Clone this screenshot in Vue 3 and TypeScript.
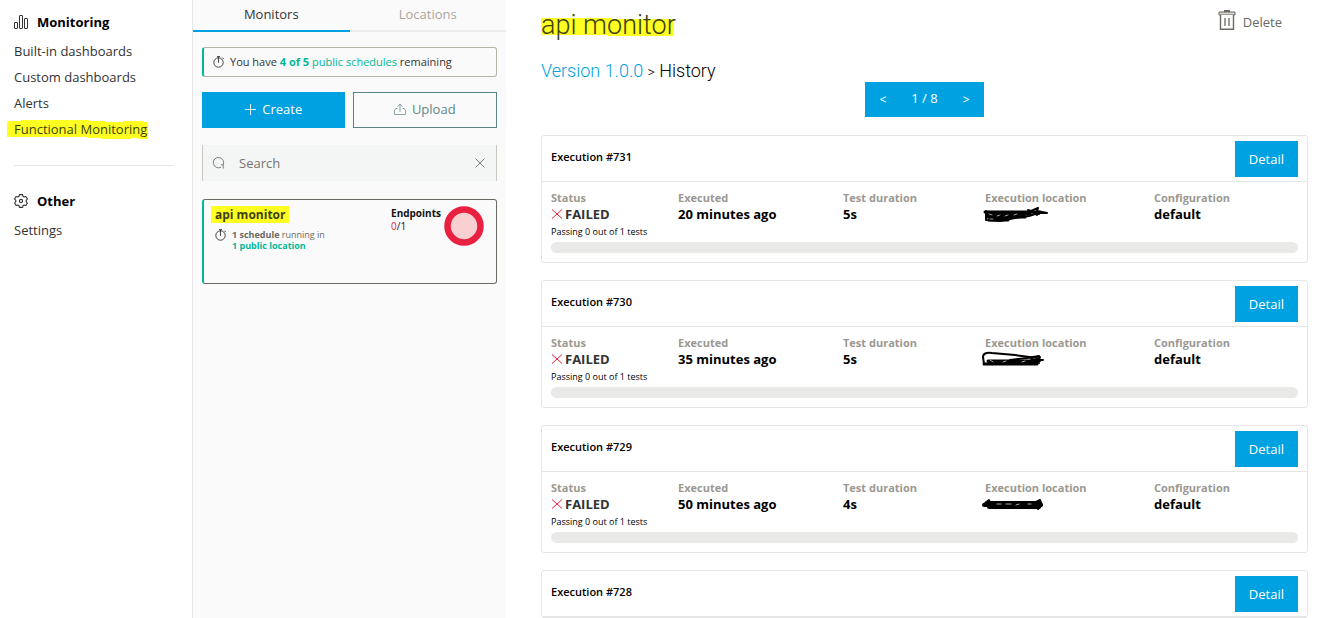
<script setup lang="ts">
import { ref } from 'vue'

interface Details {
  executed: string
  duration: string
  configuration: string
}
interface Execution {
  id: number
  details?: Details
}

const search = ref('')
const executions: Execution[] = [
  { id: 731, details: { executed: '20 minutes ago', duration: '5s', configuration: 'default' } },
  { id: 730, details: { executed: '35 minutes ago', duration: '5s', configuration: 'default' } },
  { id: 729, details: { executed: '50 minutes ago', duration: '4s', configuration: 'default' } },
  { id: 728 },
]
</script>

<template>
  <div class="app">
    <nav class="sidebar">
      <h2 class="group">
        <svg class="group-icon" viewBox="0 0 14 14" aria-hidden="true">
          <g fill="none" stroke="#333" stroke-width="1">
            <rect x="0.5" y="7.5" width="3" height="6" rx="0.5" />
            <rect x="5.5" y="0.5" width="3" height="13" rx="0.5" />
            <rect x="10.5" y="3.5" width="3" height="10" rx="0.5" />
          </g>
        </svg>
        Monitoring
      </h2>
      <ul class="links">
        <li><a href="#">Built-in dashboards</a></li>
        <li><a href="#">Custom dashboards</a></li>
        <li><a href="#">Alerts</a></li>
        <li>
          <a href="#" class="marked">
            <svg class="marker nav-marker" viewBox="0 0 141 19" aria-hidden="true">
              <path d="M0 1H14V0H82V1H98V2H116V1H136V2H141V19H131V18H124V19H94V18H80V17H0Z" fill="#ffff21" />
            </svg>
            <span>Functional Monitoring</span>
          </a>
        </li>
      </ul>
      <hr class="rule" />
      <h2 class="group">
        <svg class="group-icon" viewBox="0 0 14 14" aria-hidden="true">
          <g fill="none" stroke="#333" stroke-width="1.1" stroke-linejoin="round">
            <path d="M5 2.3 5.4.6H8.6L9 2.3 10.2 3 11.9 2.5 13.4 5 12.2 6.3V7.7L13.4 9 11.9 11.5 10.2 11 9 11.7 8.6 13.4H5.4L5 11.7 3.8 11 2.1 11.5.6 9 1.8 7.7V6.3L.6 5 2.1 2.5 3.8 3Z" />
            <circle cx="7" cy="7" r="1.6" />
          </g>
        </svg>
        Other
      </h2>
      <ul class="links">
        <li><a href="#">Settings</a></li>
      </ul>
    </nav>

    <section class="panel">
      <div class="tabs" role="tablist">
        <button class="tab active" role="tab" aria-selected="true">Monitors</button>
        <button class="tab" role="tab" aria-selected="false">Locations</button>
      </div>
      <div class="panel-body">
        <p class="notice">
          <svg class="watch" viewBox="0 0 12 12" aria-hidden="true">
            <g fill="none" stroke="#444" stroke-width="1">
              <circle cx="5.5" cy="6.5" r="4.7" />
              <path d="M5.5 6.8V.5M4 .6H7M9.3 1.6 10.8 3.1" />
            </g>
          </svg>
          <span>You have <span class="green"><b>4 of 5</b> public schedules</span> remaining</span>
        </p>
        <div class="actions">
          <button class="btn primary">
            <svg class="btn-icon" viewBox="0 0 12 12" aria-hidden="true">
              <path d="M6.5 1V12M1 6.5H12" fill="none" stroke="#fff" stroke-width="0.9" />
            </svg>
            Create
          </button>
          <button class="btn outline">
            <svg class="btn-icon" viewBox="0 0 12 12" aria-hidden="true">
              <path d="M3.5 5.5H1.8L.5 7.5V11.5H11.5V7.5L10.2 5.5H8.5M6 9V1M3.5 3.5 6 1 8.5 3.5" fill="none" stroke="#7d9ca0" stroke-width="0.9" />
            </svg>
            Upload
          </button>
        </div>
        <div class="search">
          <svg class="search-icon" viewBox="0 0 13 14" aria-hidden="true">
            <path d="M9 11.2A5.2 5.2 0 1 1 11 9.2M8.8 8.8H11.2V12.6" fill="none" stroke="#77736d" stroke-width="0.9" />
          </svg>
          <input v-model="search" type="text" placeholder="Search" aria-label="Search" />
          <button class="clear" aria-label="Clear search" @click="search = ''">
            <svg viewBox="0 0 10 10" aria-hidden="true">
              <path d="M.5.5 9.5 9.5M9.5.5.5 9.5" fill="none" stroke="#77736d" stroke-width="0.9" />
            </svg>
          </button>
        </div>
        <article class="monitor">
          <div class="monitor-main">
            <h3 class="monitor-name">api monitor</h3>
            <div class="schedule">
              <svg class="watch" viewBox="0 0 12 12" aria-hidden="true">
                <g fill="none" stroke="#444" stroke-width="1">
                  <circle cx="5.5" cy="6.5" r="4.7" />
                  <path d="M5.5 6.8V.5M4 .6H7M9.3 1.6 10.8 3.1" />
                </g>
              </svg>
              <p><b>1 schedule</b> running in<br /><b class="green">1 public location</b></p>
            </div>
          </div>
          <div class="endpoints">
            <b>Endpoints</b>
            <span><span class="red">0</span>/1</span>
          </div>
          <svg class="ring" viewBox="0 0 40 40" aria-hidden="true">
            <circle cx="20" cy="20" r="16.5" fill="#facfd2" stroke="#e9203f" stroke-width="6.5" />
          </svg>
        </article>
      </div>
    </section>

    <main class="main">
      <header class="top">
        <h1 class="title">
          <svg class="marker title-marker" viewBox="0 0 133 18" aria-hidden="true">
            <path d="M0 0H70V1H133V18H66V17H0Z" fill="#ffff21" />
          </svg>
          <span>api monitor</span>
        </h1>
        <button class="delete">
          <svg class="bin" viewBox="0 0 18 20" aria-hidden="true">
            <path d="M1 2H17V5H1Z" fill="#d6d6d0" stroke="#6b6962" />
            <path d="M6 1H12" stroke="#6b6962" stroke-width="2" />
            <path d="M2.5 5V19.2H15.5V5" fill="#fff" stroke="#6b6962" stroke-width="1.4" />
            <path d="M7 8V16M11 8V16" stroke="#77756f" stroke-width="1.4" />
          </svg>
          <span>Delete</span>
        </button>
      </header>
      <p class="crumbs"><a href="#">Version 1.0.0</a> <span class="sep">&gt;</span> History</p>
      <div class="pager">
        <button aria-label="Previous page">&lt;</button>
        <span class="page">1 / 8</span>
        <button aria-label="Next page">&gt;</button>
      </div>

      <article v-for="run in executions" :key="run.id" class="card">
        <header class="card-head">
          <h3>Execution #{{ run.id }}</h3>
          <button class="detail">Detail</button>
        </header>
        <div v-if="run.details" class="card-body">
          <dl class="facts">
            <div class="status">
              <dt>Status</dt>
              <dd>
                <svg class="cross" viewBox="0 0 12 10" aria-hidden="true">
                  <path d="M1 .5 11 9.5M11 .5 1 9.5" fill="none" stroke="#e9203f" />
                </svg>FAILED
              </dd>
              <dd class="passing">Passing 0 out of 1 tests</dd>
            </div>
            <div><dt>Executed</dt><dd>{{ run.details.executed }}</dd></div>
            <div><dt>Test duration</dt><dd>{{ run.details.duration }}</dd></div>
            <div>
              <dt>Execution location</dt>
              <dd>
                <svg class="scribble" viewBox="0 0 68 18" aria-label="Hidden location" role="img">
                  <g fill="none" stroke="#000" stroke-linecap="round" stroke-linejoin="round">
                    <template v-if="run.id === 731">
                      <path d="M3 7H54M5 9H48M5 12H43M7 15H26" stroke-width="3" />
                      <path d="M4 6V15L18 16 33 13 47 11 56 8 65 8 55 6 56 3 49 6 55 10M46 5 57 9" stroke-width="2" />
                      <path d="M7 9 10 10M8 14H11M15 11 18 10M23 11 26 10M32 10 35 9" stroke="#999" stroke-width="1" />
                    </template>
                    <template v-else-if="run.id === 730">
                      <path d="M2 14 1 7Q1 2 10 3L33 5 55 8" stroke-width="2" />
                      <path d="M2 14H55M6 11H56" stroke-width="3" />
                      <path d="M28 10 45 8 57 6 58 11 49 10 61 10M49 8 57 13M52 13 58 7" stroke-width="2" />
                      <path d="M8 10 11 12M21 12 24 11M40 12 43 11" stroke="#aaa" stroke-width="1" />
                    </template>
                    <template v-else>
                      <path d="M2 10H59M5 8H57M7 12H57" stroke-width="4" />
                      <path d="M2 9 7 5 8 8M54 7 58 5 60 10 56 14" stroke-width="2" />
                      <path d="M15 9H19M24 9H29M34 10 37 9M46 9H49" stroke="#aaa" stroke-width="1" />
                    </template>
                  </g>
                </svg>
              </dd>
            </div>
            <div><dt>Configuration</dt><dd>{{ run.details.configuration }}</dd></div>
          </dl>
          <div class="bar"></div>
        </div>
      </article>
    </main>
  </div>
</template>

<style>
body {
  background: #fff;
  overflow: hidden;
}
</style>

<style scoped>
* {
  box-sizing: border-box;
}
.app {
  display: flex;
  height: 100vh;
  overflow: hidden;
  font-family: 'Open Sans', 'Noto Sans', sans-serif;
  font-size: 13px;
  line-height: 18px;
  color: #333;
}
h1, h2, h3, p, ul, dl, dd {
  margin: 0;
  padding: 0;
}
button {
  font: inherit;
  color: inherit;
  background: none;
  border: 0;
  padding: 0;
  cursor: pointer;
}
a {
  text-decoration: none;
  color: inherit;
}
svg {
  display: block;
  flex: none;
}
.green {
  color: #00b899;
}
.red {
  color: #e9203f;
}
.marker {
  position: absolute;
  z-index: -1;
}

.sidebar {
  flex: none;
  width: 193px;
  padding: 13px 18px 0 14px;
  border-right: 1px solid #e6e6e6;
}
.group {
  display: flex;
  align-items: center;
  gap: 9px;
  font-size: 13px;
  line-height: 18px;
  color: #000;
}
.group-icon {
  width: 14px;
  height: 14px;
}
.links {
  list-style: none;
  padding-top: 7px;
}
.links li {
  height: 26px;
  line-height: 26px;
}
.marked {
  position: relative;
  z-index: 0;
  display: inline-block;
  color: #403f10;
}
.nav-marker {
  left: -7px;
  top: 4px;
  width: 141px;
  height: 19px;
}
.rule {
  margin: 23px 0 26px;
  border: 0;
  border-top: 1px solid #e6e6e6;
}

.panel {
  flex: none;
  width: 313px;
  background: #fafafa;
}
.tabs {
  display: flex;
}
.tab {
  flex: 1;
  height: 32px;
  padding-bottom: 2px;
  border-bottom: 2px solid #ebebeb;
  color: #aaa6a0;
}
.tab.active {
  border-bottom-color: #00a1e0;
  color: #333;
}
.panel-body {
  padding: 15px 9px 0;
}
.notice {
  display: flex;
  align-items: center;
  gap: 5px;
  height: 30px;
  padding-left: 9px;
  border: 1px solid #b7b3a9;
  border-left: 2px solid #00b899;
  border-radius: 3px;
  font-size: 11px;
}
.watch {
  width: 12px;
  height: 12px;
}
.actions {
  display: flex;
  gap: 8px;
  margin-top: 15px;
}
.btn {
  flex: 1;
  display: flex;
  align-items: center;
  justify-content: center;
  gap: 6px;
  height: 36px;
  padding-bottom: 2px;
}
.btn-icon {
  width: 12px;
  height: 12px;
}
.primary {
  background: #00a1e0;
  color: #fff;
}
.outline {
  border: 1px solid #5b8489;
  color: #5f868b;
}
.search {
  display: flex;
  align-items: center;
  height: 36px;
  margin-top: 17px;
  padding: 0 11px 0 9px;
  background: #f4f5f5;
  border: solid #c9c7c0;
  border-width: 0 1px;
}
.search-icon {
  width: 13px;
  height: 14px;
}
.search input {
  flex: 1;
  min-width: 0;
  height: 30px;
  margin-left: 14px;
  padding: 0;
  border: 0;
  outline: 0;
  background: none;
  font: inherit;
  color: #333;
}
.search input::placeholder {
  color: #77736d;
  opacity: 1;
}
.clear svg {
  width: 10px;
  height: 10px;
}
.monitor {
  display: flex;
  height: 85px;
  margin-top: 18px;
  padding: 6px 12px 0 7px;
  border: 1px solid #6b6962;
  border-left: 2px solid #00b899;
  border-radius: 3px;
  color: #6b6962;
}
.monitor-main {
  flex: 1;
}
.monitor-name {
  width: max-content;
  padding: 0 4px;
  background: #ffff21;
  font-size: 12px;
  line-height: 17px;
  color: #403f10;
}
.schedule {
  display: flex;
  gap: 5px;
  padding: 6px 0 0 4px;
  font-size: 9px;
  line-height: 11px;
}
.endpoints {
  display: flex;
  flex-direction: column;
  margin-right: 3px;
  padding-top: 1px;
  font-size: 10px;
  line-height: 13px;
  color: #111;
}
.ring {
  width: 40px;
  height: 40px;
}

.main {
  flex: 1;
  min-width: 0;
  padding: 9px 22px 0 35px;
}
.top {
  display: flex;
  justify-content: space-between;
  align-items: flex-start;
  padding-right: 26px;
}
.title {
  position: relative;
  z-index: 0;
  font-family: Roboto, 'Open Sans', sans-serif;
  font-size: 27px;
  font-weight: 300;
  line-height: 32px;
  color: #403f10;
}
.title-marker {
  left: 0;
  top: 9px;
  width: 133px;
  height: 18px;
}
.delete {
  display: flex;
  align-items: flex-start;
  gap: 7px;
  padding-top: 1px;
  color: #6b6962;
}
.delete span {
  padding-top: 3px;
}
.bin {
  width: 18px;
  height: 20px;
}
.crumbs {
  margin-top: 18px;
  font-family: Roboto, 'Open Sans', sans-serif;
  font-size: 18px;
  font-weight: 300;
  line-height: 24px;
  color: #000;
}
.crumbs a {
  color: #00a1e0;
}
.sep {
  font-size: 14px;
}
.pager {
  display: flex;
  align-items: center;
  justify-content: space-between;
  width: max-content;
  height: 35px;
  margin: -2px auto 18px;
  padding: 0 14px;
  gap: 25px;
  background: #00a1e0;
  color: #fff;
}
.page {
  padding-bottom: 4px;
}
.pager button {
  font-size: 12px;
}

.card {
  margin-bottom: 17px;
  border: 1px solid #e6e6e6;
  border-radius: 3px;
}
.card-head {
  display: flex;
  align-items: center;
  justify-content: space-between;
  height: 46px;
  padding: 0 9px;
  border-bottom: 1px solid #e6e6e6;
}
.card-head h3 {
  padding-bottom: 4px;
  font-size: 11px;
  font-weight: 600;
  color: #000;
}
.detail {
  height: 36px;
  padding: 0 14px;
  background: #00a1e0;
  color: #fff;
}
.card-body {
  padding: 8px 9px 9px;
}
.facts {
  display: grid;
  grid-template-columns: 127fr 165fr 142fr 169fr 144fr;
  height: 52px;
}
.facts dt {
  font-size: 11px;
  font-weight: 700;
  line-height: 16px;
  color: #9b9892;
}
.facts dd {
  display: flex;
  align-items: center;
  height: 16px;
  font-weight: 700;
  line-height: 16px;
  color: #000;
}
.status dd {
  gap: 2px;
  color: #333;
}
.status .passing {
  height: 20px;
  font-size: 9px;
  font-weight: 400;
  line-height: 20px;
  color: #000;
}
.cross {
  width: 12px;
  height: 10px;
}
.scribble {
  width: 68px;
  height: 18px;
  margin-left: -3px;
}
.bar {
  height: 11px;
  border-radius: 6px;
  background: #e9e9e7;
}
</style>
